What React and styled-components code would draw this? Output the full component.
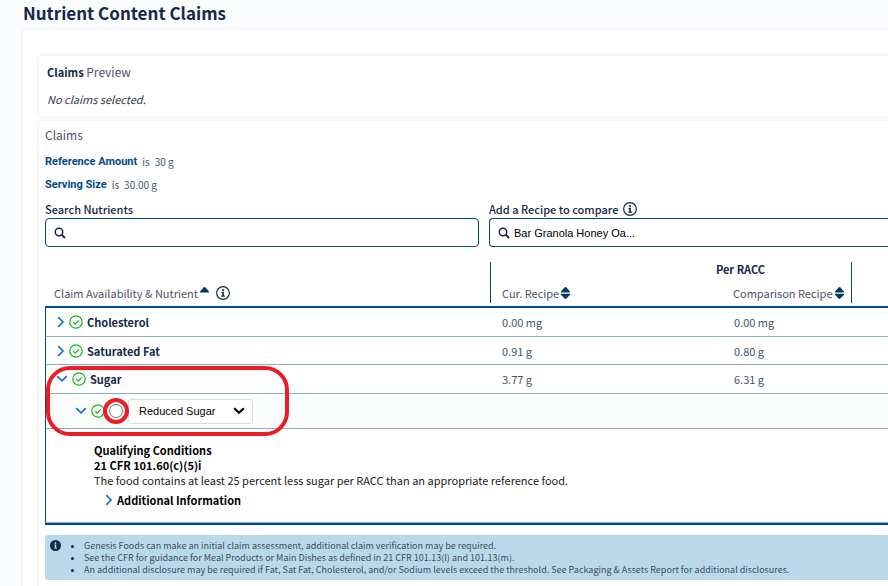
import React from 'react';
import styled, { createGlobalStyle, css } from 'styled-components';

const sans = '"Noto Sans CJK SC", "Noto Sans CJK JP", sans-serif';
const arial = '"Liberation Sans", Arial, sans-serif';
const ink = '#14284b';
const blue = '#004b87';
const slate = '#4a5468';
const rule = '#8fadc9';

const GlobalStyle = createGlobalStyle`
  *, *::before, *::after { box-sizing: border-box; }
  body {
    margin: 0;
    background: #fbfcfe;
    color: ${slate};
    font-family: ${sans};
    font-size: 11px;
    line-height: 16px;
    overflow: hidden;
  }
`;

const Page = styled.main`
  padding: 1px 0 0 23px;
`;

const Title = styled.h1`
  margin: 0;
  color: ${ink};
  font-size: 17px;
  font-weight: 700;
  line-height: 24px;
`;

const Panel = styled.div`
  margin-top: 5px;
  padding: 26px 0 16px 16px;
  background: #fff;
  border-radius: 4px 0 0 0;
  box-shadow: 0 0 4px rgba(20, 40, 75, 0.1);
`;

const Card = styled.section`
  background: #fff;
  border-radius: 4px 0 0 4px;
  box-shadow: 0 0 4px rgba(20, 40, 75, 0.12);
`;

const PreviewCard = styled(Card)`
  padding: 8px 8px 9px;
`;

const ClaimsCard = styled(Card)`
  margin-top: 5px;
  padding: 5px 0 16px 6px;
`;

const PreviewTitle = styled.h2`
  margin: 0;
  font-size: 12px;
  font-weight: 400;
  line-height: 16px;

  strong {
    color: ${ink};
    font-size: 11px;
  }
`;

const Empty = styled.p`
  margin: 11px 0 0;
  color: #30384c;
  font-style: italic;
`;

const ClaimsTitle = styled.h2`
  margin: 0 0 10px;
  font-size: 12px;
  font-weight: 400;
  line-height: 18px;
`;

const Fact = styled.p`
  display: flex;
  gap: 5px;
  margin: 0 0 7px;
  font-size: 10px;
  line-height: 16px;

  strong {
    color: ${blue};
    font-family: Roboto, ${arial};
    font-size: 11px;
    font-weight: 700;
  }
`;

const Filters = styled.div`
  display: grid;
  grid-template-columns: 434fr 399fr;
  column-gap: 10px;
`;

const LabelRow = styled.div`
  display: flex;
  align-items: center;
  gap: 5px;
  height: 17px;
  margin-bottom: 1px;

  label {
    color: ${ink};
    font-size: 11px;
    font-weight: 500;
  }
`;

const SearchBox = styled.div`
  display: flex;
  align-items: center;
  gap: 4px;
  height: 29px;
  padding-left: 8px;
  border: 1px solid ${blue};
  border-radius: 4px;

  ${({ $bleed }) => $bleed && css`
    border-right: 0;
    border-radius: 4px 0 0 4px;
  `}

  input {
    flex: 1;
    min-width: 0;
    padding: 0;
    border: 0;
    outline: 0;
    background: none;
    color: #000;
    font: 11px/16px ${arial};
  }
`;

const IconButton = styled.button`
  display: inline-flex;
  flex: none;
  padding: 0;
  border: 0;
  background: none;
  color: ${ink};
  cursor: pointer;
`;

const Svg = styled.svg`
  display: block;
  flex: none;
`;

const Table = styled.table`
  width: 100%;
  margin-top: 15px;
  border-spacing: 0;
  table-layout: fixed;
`;

const NutrientCol = styled.col``;
const CurrentCol = styled.col`width: 232px;`;
const ComparisonCol = styled.col`width: 129px;`;
const TailCol = styled.col`width: 37px;`;

const HeadCell = styled.th`
  height: ${({ $group }) => ($group ? '15px' : '26px')};
  padding: ${({ $first }) => ($first ? '0 0 0 9px' : '0 0 0 11px')};
  border-left: ${({ $edge }) => ($edge ? `1px solid ${blue}` : '0')};
  color: ${slate};
  font-weight: 400;
  text-align: left;
  vertical-align: bottom;
`;

const GroupCell = styled(HeadCell)`
  padding: 0 86px 0 0;
  color: ${ink};
  font-size: 11px;
  font-weight: 700;
  line-height: 14px;
  text-align: right;
  vertical-align: top;
`;

const HeadGap = styled.td`
  height: 5px;
  padding: 0;
  border-bottom: 2px solid ${blue};
  line-height: 0;
`;

const HeadLabel = styled.div`
  display: flex;
  align-items: center;
  gap: 2px;
  height: 20px;
  white-space: nowrap;
`;

const InfoSlot = styled.span`
  display: inline-flex;
  margin-left: 5px;
`;

const Cell = styled.td`
  height: ${({ $height }) => $height || 29}px;
  padding: 0 0 0 12px;
  border-bottom: 1px solid ${rule};
  background: ${({ $tint }) => ($tint ? '#fbfdfd' : 'none')};

  &:first-child {
    padding-left: ${({ $indent }) => $indent || 9}px;
    border-left: 1px solid ${blue};
  }
`;

const Line = styled.div`
  display: flex;
  align-items: center;
  gap: 4px;
  color: ${ink};
  font-weight: 700;
`;

const Radio = styled.input`
  appearance: none;
  width: 14px;
  height: 14px;
  margin: 0;
  border: 1px solid #777;
  border-radius: 50%;
  background: #fff;
`;

const RadioMark = styled.span`
  position: relative;
  display: inline-flex;
  margin-right: 1px;

  &::after {
    content: '';
    position: absolute;
    inset: -6px;
    border: 4px solid #ec1c24;
    border-radius: 50%;
    pointer-events: none;
  }
`;

const Picker = styled.span`
  display: inline-grid;
  align-items: center;

  select, svg { grid-area: 1 / 1; }
  svg { justify-self: end; margin-right: 8px; pointer-events: none; }

  select {
    appearance: none;
    width: 125px;
    height: 25px;
    padding: 0 28px 0 10px;
    border: 1px solid #dcdcdc;
    border-radius: 3px;
    background: #fff;
    color: #000;
    font: 11px/16px ${arial};
  }
`;

const Marked = styled.div`
  position: relative;

  &::before {
    content: '';
    position: absolute;
    top: -33px;
    left: -28px;
    width: 243px;
    height: 70px;
    border: 4px solid #ec1c24;
    border-radius: 24px;
    pointer-events: none;
  }
`;

const DetailCell = styled.td`
  padding: 14px 0 14px 48px;
  border-bottom: 1px solid ${rule};
  border-left: 1px solid ${blue};
  box-shadow: 0 2px 0 ${blue};
  color: #222;
  line-height: 15px;

  h3, p { margin: 0; }
  h3 { color: #000; font-size: 11px; font-weight: 700; line-height: 15px; }
`;

const More = styled.button`
  display: flex;
  align-items: center;
  gap: 4px;
  margin: 4px 0 0 9px;
  padding: 0;
  border: 0;
  background: none;
  color: #000;
  font: 700 11px/16px ${sans};
`;

const Notice = styled.aside`
  display: flex;
  gap: 10px;
  margin-top: 12px;
  padding: 5px 0 4px 5px;
  border-radius: 3px 0 0 3px;
  background: #b9d9eb;
  color: #414b5e;
  font-size: 9px;
  line-height: 12px;

  ul { margin: 0; padding: 0 0 0 13px; }
  li::marker { color: ${ink}; }
`;

function Info({ solid }) {
  const size = solid ? 11 : 14;
  return (
    <Svg width={size} height={size} viewBox="0 0 26 26" fill="none">
      <circle cx="13" cy="13" r={solid ? 13 : 11.8} fill={solid ? ink : 'none'} stroke={solid ? 'none' : ink} strokeWidth="2.2" />
      <g fill={solid ? '#b9d9eb' : ink}>
        <circle cx="13" cy="7.4" r="2" />
        <path d="M10 10.8h4.6v6.8h1.8V20H9.8v-2.4h1.8v-4.4H10z" />
      </g>
    </Svg>
  );
}

function Search() {
  return (
    <Svg width="12" height="12" viewBox="0 0 24 24" fill="none" stroke={ink} strokeWidth="3">
      <circle cx="10" cy="10" r="7.5" />
      <path d="M15.5 15.5 22 22" strokeWidth="3.6" />
    </Svg>
  );
}

function Check() {
  return (
    <Svg width="14" height="14" viewBox="0 0 28 28" fill="none" stroke="#12b51c">
      <circle cx="14" cy="14" r="12.4" strokeWidth="2.4" />
      <path d="m8.5 14.2 4 4 7-7.4" strokeWidth="2.6" />
    </Svg>
  );
}

function Chevron({ open }) {
  return open ? (
    <Svg width="13" height="12" viewBox="-1 0 13 12" fill="none" stroke="#1c6fc4" strokeWidth="1.7">
      <path d="m1.2 3.2 4.8 4.6 4.8-4.6" />
    </Svg>
  ) : (
    <Svg width="10" height="12" viewBox="0 0 10 12" fill="none" stroke="#1c6fc4" strokeWidth="1.7">
      <path d="m3.2 1.2 4.8 4.8-4.8 4.8" />
    </Svg>
  );
}

function Sort({ up }) {
  return (
    <Svg width="9" height="12" viewBox="0 0 9 12" fill="#003865">
      <path d="M0 5.4V4.4L3.6.4Q4.5-.4 5.4.4L9 4.4v1z" />
      {!up && <path d="M0 6.8v1l3.6 3.8q.9.8 1.8 0L9 7.8v-1z" />}
    </Svg>
  );
}

function NutrientRow({ name, current, comparison, open, height }) {
  return (
    <tr>
      <Cell $height={height}>
        <Line>
          <IconButton type="button" aria-expanded={!!open} aria-label={`Toggle ${name}`}>
            <Chevron open={open} />
          </IconButton>
          <Check />
          {name}
        </Line>
      </Cell>
      <Cell $height={height}>{current}</Cell>
      <Cell $height={height}>{comparison}</Cell>
      <Cell $height={height} />
    </tr>
  );
}

export default function App() {
  return (
    <>
      <GlobalStyle />
      <Page>
        <Title>Nutrient Content Claims</Title>
        <Panel>
          <PreviewCard>
            <PreviewTitle><strong>Claims</strong> Preview</PreviewTitle>
            <Empty>No claims selected.</Empty>
          </PreviewCard>
          <ClaimsCard>
            <ClaimsTitle>Claims</ClaimsTitle>
            <Fact><strong>Reference Amount</strong><span>is</span><span>30 g</span></Fact>
            <Fact><strong>Serving Size</strong><span>is</span><span>30.00 g</span></Fact>
            <Filters>
              <div>
                <LabelRow><label htmlFor="nutrients">Search Nutrients</label></LabelRow>
                <SearchBox><Search /><input id="nutrients" type="text" /></SearchBox>
              </div>
              <div>
                <LabelRow>
                  <label htmlFor="recipe">Add a Recipe to compare</label>
                  <IconButton type="button" aria-label="About comparing recipes"><Info /></IconButton>
                </LabelRow>
                <SearchBox $bleed>
                  <Search />
                  <input id="recipe" type="text" defaultValue="Bar Granola Honey Oa..." />
                </SearchBox>
              </div>
            </Filters>
            <Table>
              <colgroup>
                <NutrientCol /><CurrentCol /><ComparisonCol /><TailCol />
              </colgroup>
              <thead>
                <tr>
                  <HeadCell $group />
                  <GroupCell $group $edge colSpan={2}>Per RACC</GroupCell>
                  <HeadCell $group $edge />
                </tr>
                <tr>
                  <HeadCell $first>
                    <HeadLabel>
                      Claim Availability &amp; Nutrient
                      <IconButton type="button" aria-label="Sort by nutrient"><Sort up /></IconButton>
                      <InfoSlot>
                        <IconButton type="button" aria-label="About claim availability"><Info /></IconButton>
                      </InfoSlot>
                    </HeadLabel>
                  </HeadCell>
                  <HeadCell $edge>
                    <HeadLabel>
                      Cur. Recipe
                      <IconButton type="button" aria-label="Sort by current recipe"><Sort /></IconButton>
                    </HeadLabel>
                  </HeadCell>
                  <HeadCell>
                    <HeadLabel>
                      Comparison Recipe
                      <IconButton type="button" aria-label="Sort by comparison recipe"><Sort /></IconButton>
                    </HeadLabel>
                  </HeadCell>
                  <HeadCell $edge />
                </tr>
                <tr><HeadGap colSpan={4} /></tr>
              </thead>
              <tbody>
                <NutrientRow name="Cholesterol" current="0.00 mg" comparison="0.00 mg" />
                <NutrientRow name="Saturated Fat" current="0.91 g" comparison="0.80 g" height={28} />
                <NutrientRow name="Sugar" current="3.77 g" comparison="6.31 g" open />
                <tr>
                  <Cell colSpan={4} $height={35} $indent={28} $tint>
                    <Marked>
                      <Line>
                        <IconButton type="button" aria-expanded="true" aria-label="Toggle Reduced Sugar">
                          <Chevron open />
                        </IconButton>
                        <Check />
                        <RadioMark><Radio type="radio" name="claim" aria-label="Select Reduced Sugar" /></RadioMark>
                        <Picker>
                          <select aria-label="Sugar claim" defaultValue="Reduced Sugar">
                            <option>Reduced Sugar</option>
                          </select>
                          <Svg width="12" height="8" viewBox="0 0 12 8" fill="none" stroke="#000" strokeWidth="2.2">
                            <path d="m1.2 1.2 4.8 4.6 4.8-4.6" />
                          </Svg>
                        </Picker>
                      </Line>
                    </Marked>
                  </Cell>
                </tr>
                <tr>
                  <DetailCell colSpan={4}>
                    <h3>Qualifying Conditions</h3>
                    <h3>21 CFR 101.60(c)(5)i</h3>
                    <p>The food contains at least 25 percent less sugar per RACC than an appropriate reference food.</p>
                    <More type="button" aria-expanded="false"><Chevron />Additional Information</More>
                  </DetailCell>
                </tr>
              </tbody>
            </Table>
            <Notice>
              <Info solid />
              <ul>
                <li>Genesis Foods can make an initial claim assessment, additional claim verification may be required.</li>
                <li>See the CFR for guidance for Meal Products or Main Dishes as defined in 21 CFR 101.13(l) and 101.13(m).</li>
                <li>An additional disclosure may be required if Fat, Sat Fat, Cholesterol, and/or Sodium levels exceed the threshold. See Packaging &amp; Assets Report for additional disclosures.</li>
              </ul>
            </Notice>
          </ClaimsCard>
        </Panel>
      </Page>
    </>
  );
}
